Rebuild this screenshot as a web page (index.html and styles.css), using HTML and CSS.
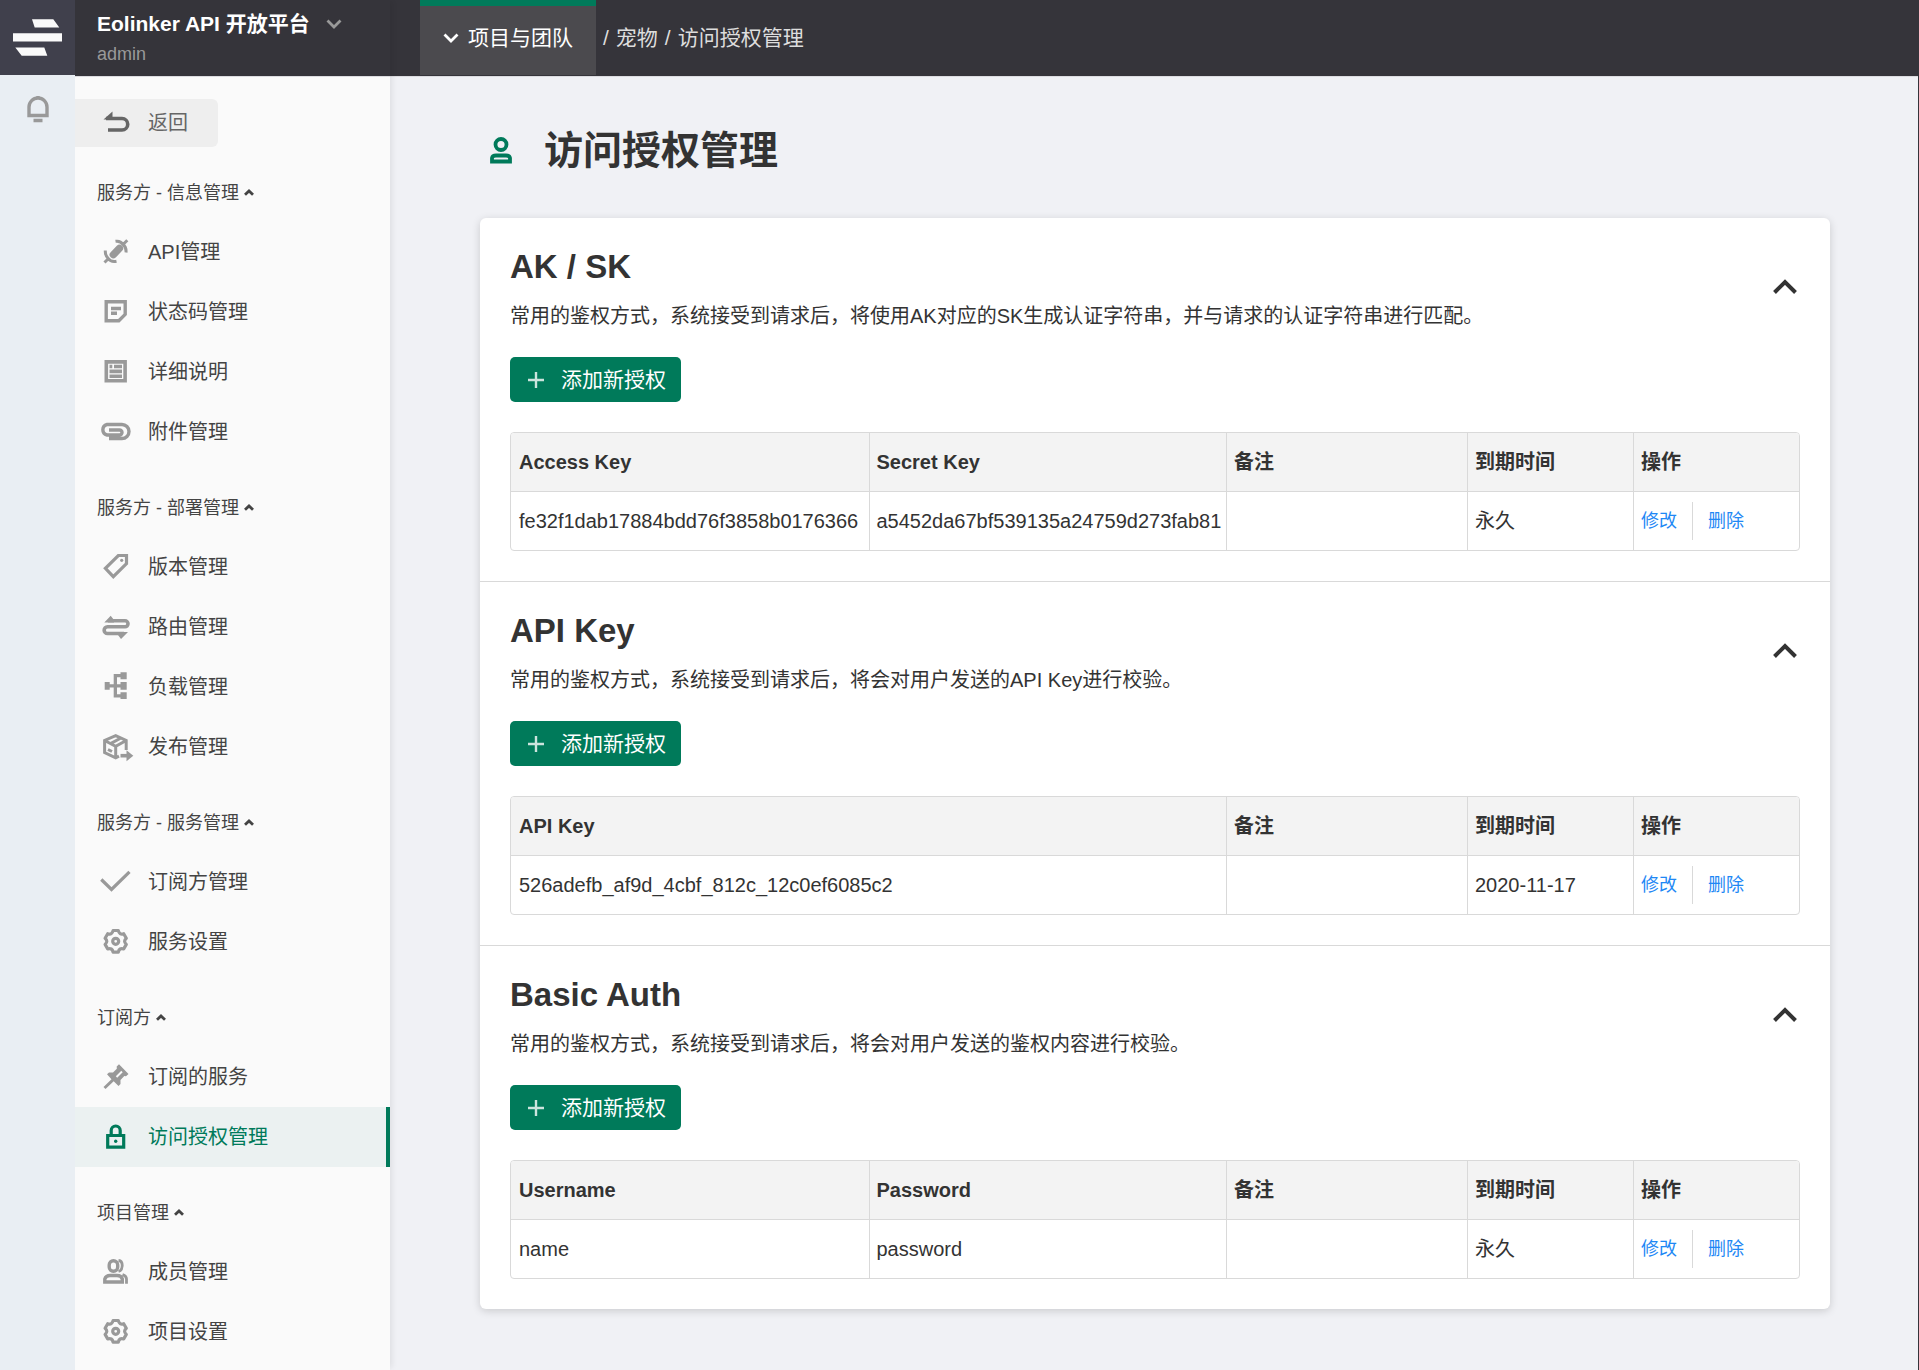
FILE: index.html
```html
<!DOCTYPE html>
<html lang="zh-CN">
<head>
    <meta charset="UTF-8">
    <meta name="viewport" content="width=device-width, initial-scale=1.0">
    <title>访问授权管理</title>
    <link rel="stylesheet" href="styles.css">
</head>
<body>
    <!-- 公用图标 -->
    <svg class="symbols" aria-hidden="true">
        <symbol id="arrow-up" viewBox="0 0 10 7"><path d="M1 5.800 5 2 9 5.800" fill="none" stroke="currentColor" stroke-width="2.8"/></symbol>
        <symbol id="arrow-down" viewBox="0 0 16 10"><path d="M1.500 1.500 8 8 14.500 1.500" fill="none" stroke="currentColor" stroke-width="2.8"/></symbol>
        <symbol id="fold" viewBox="0 0 24 16"><path d="M1.500 13.5 12 3 22.500 13.5" fill="none" stroke="currentColor" stroke-width="4"/></symbol>
        <symbol id="plus" viewBox="0 0 16 16"><path d="M8 0V16M0 8H16" fill="none" stroke="currentColor" stroke-width="2.4"/></symbol>
        <symbol id="gear" viewBox="0 0 30 30">
            <g transform="translate(15.7 14.3)" fill="none" stroke="currentColor" stroke-linejoin="round">
                <path stroke-width="3.2" d="M-2.6-10.8H2.6Q3.6-6.2 8-7.6L10.6-3.1Q7.2 0 10.6 3.1L8 7.6Q3.6 6.2 2.6 10.8H-2.6Q-3.6 6.2-8 7.6L-10.6 3.1Q-7.2 0-10.6-3.1L-8-7.6Q-3.6-6.2-2.6-10.8Z"/>
                <circle r="3" stroke-width="3.2"/>
            </g>
        </symbol>
    </svg>
    <div class="rail">
        <a class="logo" href="#" aria-label="Eolinker">
            <svg width="75" height="75" fill="#fafafa"><path d="M32 19.3H53.3L59.3 27.5H34.7ZM13 33.3H62V41.5H13ZM15.3 47.5H44.3L47.3 55.7H21.7Z"/></svg>
        </a>
        <button class="bell" aria-label="消息">
            <svg width="24" height="28" fill="none" stroke="#999" stroke-width="3.4"><path d="M3 20.5V12A9 9 0 0 1 21 12V20.5ZM12 4V1M7.500 25.500H16.500"/></svg>
        </button>
    </div>
    <div class="side">
        <div class="space_box">
            <button class="space_name">Eolinker API 开放平台 <svg class="down"><use href="#arrow-down"/></svg></button>
            <span class="user">admin</span>
        </div>
        <nav class="menu">
            <a class="back" href="#">
                <svg class="icon" viewBox="0 0 30 30"><path d="M3.5 11.600 12.500 3.500V11.600Z" fill="currentColor"/><path d="M6 10.500H22A5.700 5.700 0 0 1 22 22H8" fill="none" stroke="currentColor" stroke-width="3.600"/></svg>
                返回
            </a>
            <button class="group">服务方 - 信息管理<svg class="up"><use href="#arrow-up"/></svg></button>
            <a class="item" href="#">
                <svg class="icon" viewBox="0 0 30 30" fill="none" stroke="currentColor">
                    <path stroke-width="7.400" stroke-linecap="round" d="M13.300 17.700 19.500 11.300"/>
                    <path stroke-width="3" d="M15.500 4.300Q20.500 3.500 23 7.500Q26.500 10 26 15.500M22.500 8 27.300 3.200M5.300 13.500Q5 18.500 8.300 21.500Q11 25.500 16.500 24.300M9 21 4.500 25.500"/>
                </svg>
                API管理
            </a>
            <a class="item" href="#">
                <svg class="icon" viewBox="0 0 30 30" fill="none" stroke="currentColor" stroke-width="3.400"><path d="M6.200 4.800H25.200V17.400L18.800 23.800H6.200ZM11 11.500H21M11 16.300H17"/></svg>
                状态码管理
            </a>
            <a class="item" href="#">
                <svg class="icon" viewBox="0 0 30 30" fill="none" stroke="currentColor" stroke-width="3.600"><path d="M6.300 4.900H25.100V23.700H6.300ZM9.500 9.500H12.300M14 9.500H22M9.500 14.400H22M9.500 19.200H22"/></svg>
                详细说明
            </a>
            <a class="item" href="#">
                <svg class="icon" viewBox="0 0 30 30" fill="none" stroke="currentColor" stroke-width="3.400"><path d="M9 21.500H22A7 7 0 0 0 22 7.500H7A5.400 5.400 0 0 0 7 18H19.500A2.500 2.500 0 0 0 19.500 13H9"/></svg>
                附件管理
            </a>
            <button class="group">服务方 - 部署管理<svg class="up"><use href="#arrow-up"/></svg></button>
            <a class="item" href="#">
                <svg class="icon" viewBox="0 0 30 30" fill="none" stroke="currentColor" stroke-width="3.200"><path d="M18.300 3.500H26.500V11.700L13.300 24.600 5.400 16.300Z"/><circle cx="21.700" cy="8.300" r="1.600" fill="currentColor" stroke="none"/></svg>
                版本管理
            </a>
            <a class="item" href="#">
                <svg class="icon" viewBox="0 0 30 30" fill="none" stroke="currentColor" stroke-width="3.600"><path d="M8 8.800H25A2.900 2.900 0 0 1 25 14.800H7.500A3.200 3.200 0 0 0 7.500 21.500H24"/><path d="M4.300 10.500 10.700 3.700 14 8V10.500ZM28 20 21 27 18 23V20Z" fill="currentColor" stroke="none"/></svg>
                路由管理
            </a>
            <a class="item" href="#">
                <svg class="icon" viewBox="0 0 30 30" fill="currentColor"><path d="M4.700 10H9.700V12.300H13.700V2H20.500V.3H26.700V7.200H20.500V5.200H17V12.300H20.500V10H26.700V17.700H20.500V15.500H17V22.200H20.500V20.200H26.700V27H20.500V25.400H13.700V15.500H9.700V17.700H4.700Z"/></svg>
                负载管理
            </a>
            <a class="item" href="#">
                <svg class="icon" viewBox="0 0 30 30" fill="none" stroke="currentColor" stroke-width="3"><path d="M26.200 18V8.500L15.700 3.600 4.600 8.500V20.500L15.700 25.800 19 24.200M4.600 8.500 15.700 14.300 26.200 8.500M15.700 14V25.500M10 11.800 21 6M8 17.500 12 19.500"/><path d="M20.500 23.700H29" stroke-width="3.600"/><path d="M26.500 18.300 33.300 23.700 26.500 29.200Z" fill="currentColor" stroke="none"/></svg>
                发布管理
            </a>
            <button class="group">服务方 - 服务管理<svg class="up"><use href="#arrow-up"/></svg></button>
            <a class="item" href="#">
                <svg class="icon" viewBox="0 0 30 30" fill="none" stroke="currentColor" stroke-width="3.200"><path d="M1.300 12.500 11.500 22.500 29.500 4.800"/></svg>
                订阅方管理
            </a>
            <a class="item" href="#">
                <svg class="icon"><use href="#gear"/></svg>
                服务设置
            </a>
            <button class="group">订阅方<svg class="up"><use href="#arrow-up"/></svg></button>
            <a class="item" href="#">
                <svg class="icon" viewBox="0 0 30 30" fill="currentColor"><path d="M19 2.300 28.500 12 26 14.300 24.300 14 20.500 18V22L18.500 24 13.700 19.300 5.500 27 3.500 25 11.500 17.200 7 12.300 9 10.500H13L16.800 6.700 16.700 4.600Z"/><path d="M16.500 15 22 9.500" stroke="#fafafa" stroke-width="2"/></svg>
                订阅的服务
            </a>
            <a class="item active" href="#">
                <svg class="icon" viewBox="0 0 30 30" fill="none" stroke="currentColor" stroke-width="3.200"><path d="M7.700 13.500H23.700V25.200H7.700ZM11.200 13V8.500A4.500 4.500 0 0 1 20.200 8.500V13"/><circle cx="15.700" cy="19.200" r="1.700" fill="currentColor" stroke="none"/></svg>
                访问授权管理
            </a>
            <button class="group">项目管理<svg class="up"><use href="#arrow-up"/></svg></button>
            <a class="item" href="#">
                <svg class="icon" viewBox="0 0 30 30" fill="none" stroke="currentColor" stroke-width="3.400"><rect x="9.200" y="3.800" width="8.500" height="10.500" rx="4.200"/><path d="M4.800 25V22Q6 18.500 10 18.500H17Q21.500 18.500 22.300 22V25Z"/><path stroke-width="2.800" d="M18.500 3.500Q22.500 4 22.200 9Q22 13.500 18.500 14.500M22.500 17.500Q26.500 19 26.500 22V26.700"/></svg>
                成员管理
            </a>
            <a class="item" href="#">
                <svg class="icon"><use href="#gear"/></svg>
                项目设置
            </a>
        </nav>
    </div>
    <div class="main">
        <div class="topbar">
            <button class="project_btn"><svg class="down"><use href="#arrow-down"/></svg>项目与团队</button>
            <div class="crumbs">
                <span>/</span><a href="#">宠物</a><span>/</span><a href="#">访问授权管理</a>
            </div>
        </div>
        <div class="content">
            <div class="page_title">
                <svg width="24" height="28" fill="none" stroke="#007a5a" stroke-width="3.800"><circle cx="12" cy="7.500" r="5.500"/><path d="M3 24.500V21Q3.500 18.500 7 18.500H17Q20.500 18.500 21 21V24.500Z"/></svg>
                <h1>访问授权管理</h1>
            </div>
            <div class="card">
                <section class="auth">
                    <div class="auth_head">
                        <div>
                            <h2>AK / SK</h2>
                            <p>常用的鉴权方式，系统接受到请求后，将使用AK对应的SK生成认证字符串，并与请求的认证字符串进行匹配。</p>
                        </div>
                        <button class="fold" aria-label="收起"><svg width="24" height="16"><use href="#fold"/></svg></button>
                    </div>
                    <button class="add"><svg width="16" height="16"><use href="#plus"/></svg>添加新授权</button>
                    <table>
                        <thead>
                            <tr><th>Access Key</th><th>Secret Key</th><th class="col_note">备注</th><th class="col_time">到期时间</th><th class="col_op">操作</th></tr>
                        </thead>
                        <tbody>
                            <tr>
                                <td>fe32f1dab17884bdd76f3858b0176366</td>
                                <td>a5452da67bf539135a24759d273fab81</td>
                                <td></td>
                                <td>永久</td>
                                <td><div class="ops"><a href="#">修改</a><a href="#">删除</a></div></td>
                            </tr>
                        </tbody>
                    </table>
                </section>
                <section class="auth">
                    <div class="auth_head">
                        <div>
                            <h2>API Key</h2>
                            <p>常用的鉴权方式，系统接受到请求后，将会对用户发送的API Key进行校验。</p>
                        </div>
                        <button class="fold" aria-label="收起"><svg width="24" height="16"><use href="#fold"/></svg></button>
                    </div>
                    <button class="add"><svg width="16" height="16"><use href="#plus"/></svg>添加新授权</button>
                    <table>
                        <thead>
                            <tr><th>API Key</th><th class="col_note">备注</th><th class="col_time">到期时间</th><th class="col_op">操作</th></tr>
                        </thead>
                        <tbody>
                            <tr>
                                <td>526adefb_af9d_4cbf_812c_12c0ef6085c2</td>
                                <td></td>
                                <td>2020-11-17</td>
                                <td><div class="ops"><a href="#">修改</a><a href="#">删除</a></div></td>
                            </tr>
                        </tbody>
                    </table>
                </section>
                <section class="auth">
                    <div class="auth_head">
                        <div>
                            <h2>Basic Auth</h2>
                            <p>常用的鉴权方式，系统接受到请求后，将会对用户发送的鉴权内容进行校验。</p>
                        </div>
                        <button class="fold" aria-label="收起"><svg width="24" height="16"><use href="#fold"/></svg></button>
                    </div>
                    <button class="add"><svg width="16" height="16"><use href="#plus"/></svg>添加新授权</button>
                    <table>
                        <thead>
                            <tr><th>Username</th><th>Password</th><th class="col_note">备注</th><th class="col_time">到期时间</th><th class="col_op">操作</th></tr>
                        </thead>
                        <tbody>
                            <tr>
                                <td>name</td>
                                <td>password</td>
                                <td></td>
                                <td>永久</td>
                                <td><div class="ops"><a href="#">修改</a><a href="#">删除</a></div></td>
                            </tr>
                        </tbody>
                    </table>
                </section>
            </div>
        </div>
    </div>
</body>
</html>
```
FILE: styles.css
```css
* {
    margin: 0;
    padding: 0;
    box-sizing: border-box;
}
body {
    display: flex;
    min-height: 100vh;
    background-color: #f0f1f5;
    color: #333;
    font-family: "Liberation Sans", "Noto Sans CJK SC", sans-serif;
    font-size: 20px;
    line-height: 30px;
}
a {
    color: inherit;
    text-decoration: none;
}
button {
    border: none;
    background: none;
    color: inherit;
    font: inherit;
    cursor: pointer;
}
.symbols {
    position: absolute;
    width: 0;
    height: 0;
}
.icon {
    flex: none;
    width: 30px;
    height: 30px;
    overflow: visible;
}
.up {
    width: 10px;
    height: 7px;
    margin-left: 5px;
}
.down {
    width: 16px;
    height: 10px;
}
/* 最左侧栏 */
.rail {
    flex: none;
    width: 75px;
    background-color: #e9eef3;
}
.logo {
    display: block;
    height: 75px;
    background-color: #40404c;
}
.logo svg,
.bell svg {
    display: block;
}
.bell {
    display: block;
    margin: 20px auto;
}
/* 菜单 */
.side {
    flex: none;
    width: 315px;
    background-color: #fafafa;
    box-shadow: 4px 0 6px -2px rgba(0, 0, 0, 0.08);
    z-index: 1;
}
.space_box {
    height: 77px;
    padding: 9px 22px;
    background-color: #35343a;
    border-bottom: 1px solid #dcdce0;
    color: #999;
    font-size: 18px;
}
.space_name {
    display: flex;
    align-items: center;
    gap: 16px;
    color: #fff;
    font-size: 21px;
    font-weight: bold;
}
.space_name .down {
    color: #999;
}
.user {
    display: block;
}
.menu {
    padding-top: 22px;
}
.back {
    display: flex;
    align-items: center;
    gap: 18px;
    width: 143px;
    height: 48px;
    padding-left: 25px;
    background-color: #eee;
    border-radius: 0 6px 6px 0;
    color: #666;
}
.group {
    display: flex;
    align-items: center;
    width: 100%;
    height: 75px;
    padding: 16px 22px 0;
    color: #444;
    font-size: 18px;
}
.item {
    display: flex;
    align-items: center;
    gap: 18px;
    height: 60px;
    padding-left: 25px;
    color: #444;
}
.item .icon {
    color: #999;
}
.item.active {
    background-color: #ebf1f1;
    border-right: 4px solid #007a5a;
    color: #007a5a;
}
.item.active .icon {
    color: #007a5a;
}
/* 右侧 */
.main {
    flex: 1;
    min-width: 0;
    border-right: 1px solid #35343a;
}
.topbar {
    display: flex;
    height: 77px;
    padding-left: 30px;
    background-color: #35343a;
    border-bottom: 1px solid #dcdce0;
    color: #ddd;
    font-size: 21px;
}
.project_btn {
    display: flex;
    align-items: center;
    gap: 9px;
    height: 75px;
    padding: 0 23px 6px;
    background-color: #4b4a4e;
    border-top: 6px solid #007a5a;
    color: #fff;
}
.crumbs {
    display: flex;
    align-items: center;
    gap: 7px;
    height: 75px;
    padding-left: 7px;
}
.content {
    padding: 44px 88px 60px 90px;
}
.page_title {
    display: flex;
    align-items: center;
    gap: 31px;
    padding-left: 9px;
    margin-bottom: 37px;
}
.page_title h1 {
    font-size: 39px;
    line-height: 60px;
}
.card {
    background-color: #fff;
    border-radius: 6px;
    box-shadow: 0 2px 8px rgba(0, 0, 0, 0.16);
}
.auth {
    padding: 30px;
}
.auth + .auth {
    border-top: 1px solid #d9d9d9;
}
.auth_head {
    display: flex;
    justify-content: space-between;
    margin-bottom: 26px;
}
.auth h2 {
    margin-bottom: 15px;
    font-size: 33px;
    line-height: 38px;
}
.fold {
    align-self: center;
    padding: 3px 3px 9px;
}
.fold svg {
    display: block;
}
.add {
    display: flex;
    align-items: center;
    gap: 17px;
    height: 45px;
    padding: 0 15px 0 18px;
    margin-bottom: 30px;
    background-color: #007a5a;
    border-radius: 5px;
    color: #fff;
    font-size: 21px;
}
.add svg {
    opacity: 0.8;
}
/* 表格 */
table {
    width: 100%;
    table-layout: fixed;
    border: 1px solid #d9d9d9;
    border-radius: 4px;
    border-spacing: 0;
    overflow: hidden;
}
th,
td {
    height: 58px;
    padding: 0 8px;
    text-align: left;
}
th {
    height: 59px;
    background-color: #f3f3f3;
    border-bottom: 1px solid #d9d9d9;
}
th + th,
td + td {
    padding-left: 7px;
    border-left: 1px solid #d9d9d9;
}
.col_note {
    width: 241px;
}
.col_time {
    width: 166px;
}
.col_op {
    width: 166px;
}
.ops {
    display: flex;
    color: #1e88f5;
    font-size: 18px;
    line-height: 38px;
}
.ops a + a {
    padding-left: 15px;
    margin-left: 15px;
    border-left: 1px solid #d9d9d9;
}
```
